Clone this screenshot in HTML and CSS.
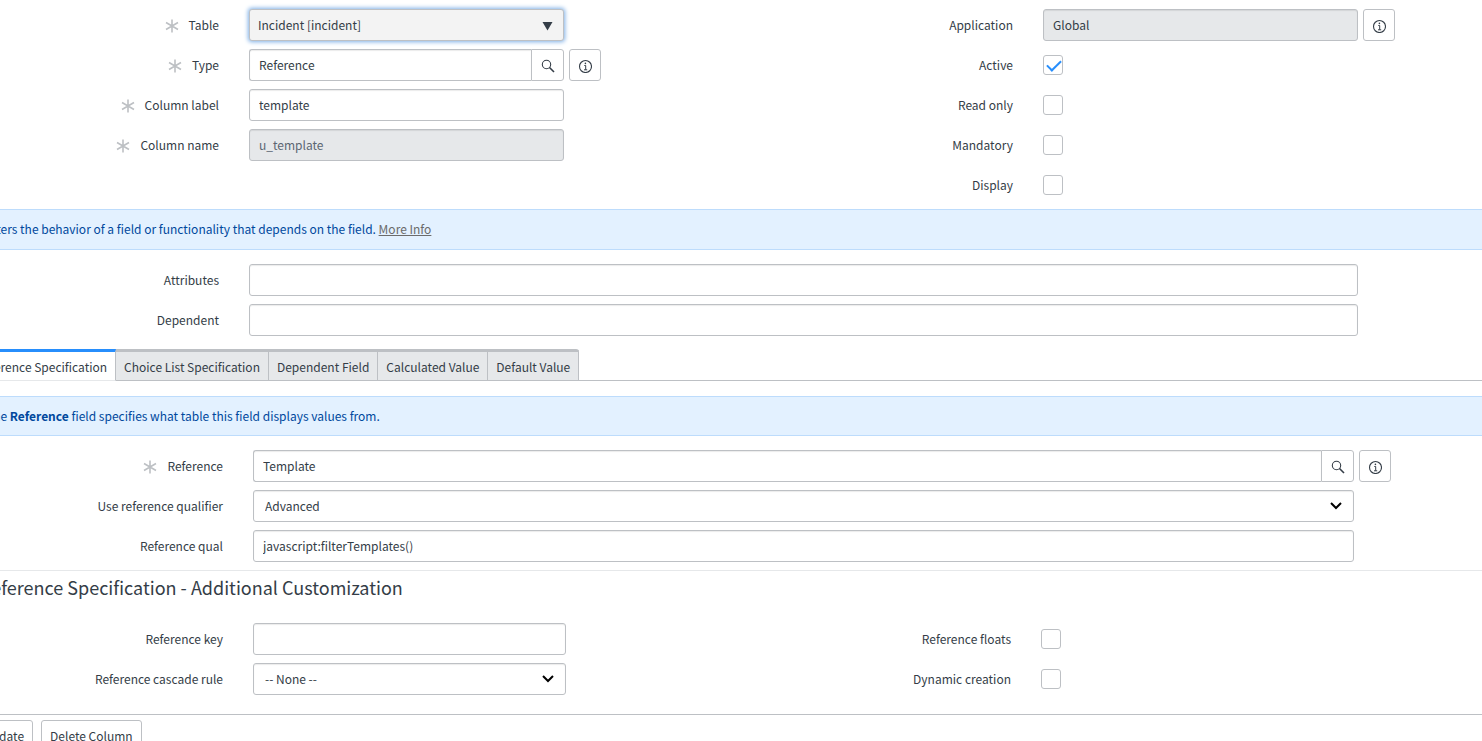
FILE: index.html
```html
<!doctype html>
<html lang="en">
<head>
    <meta charset="utf-8">
    <meta name="viewport" content="width=device-width, initial-scale=1">
    <title>Dictionary Entry</title>
    <link rel="stylesheet" href="styles.css">
</head>
<body>
    <!-- shared icons -->
    <svg class="sprite" aria-hidden="true">
        <symbol id="star" viewBox="0 0 14 14">
            <path d="M7 0.5v13M1 3.5l12 7M13 3.5l-12 7" fill="none" stroke="#bdc0c4" stroke-width="1.6"/>
        </symbol>
        <symbol id="search" viewBox="0 0 14 14">
            <circle cx="5.5" cy="5.5" r="4.2" fill="none" stroke="#343d47" stroke-width="1.1"/>
            <path d="M8.5 8.5l4.5 4.5" fill="none" stroke="#343d47" stroke-width="1.6"/>
        </symbol>
        <symbol id="info" viewBox="0 0 14 14">
            <circle cx="7.5" cy="7.5" r="6" fill="none" stroke="#343d47" stroke-width="1.1"/>
            <path d="M6.3 6.5h1.4v4.2M6 10.8h3.2" fill="none" stroke="#343d47" stroke-width="1"/>
            <circle cx="7.4" cy="4.4" r="0.8" fill="#343d47"/>
        </symbol>
        <symbol id="chevron" viewBox="0 0 14 14">
            <path d="M1 4l5 5 5-5" fill="none" stroke="#000" stroke-width="2"/>
        </symbol>
        <symbol id="triangle" viewBox="0 0 14 14">
            <path d="M2.5 4h10l-5 8.5z" fill="#343d47"/>
        </symbol>
    </svg>

    <form class="page">
        <div class="fields">
            <label class="label" for="table"><svg class="star"><use href="#star"/></svg>Table</label>
            <div class="field select">
                <select id="table" class="control focused"><option>Incident [incident]</option></select>
                <svg class="arrow"><use href="#triangle"/></svg>
            </div>
            <label class="label right" for="application">Application</label>
            <div class="field right"><input id="application" class="control" type="text" value="Global" readonly></div>
            <div class="addon right"><button type="button" class="icon-btn" aria-label="Application info"><svg class="icon"><use href="#info"/></svg></button></div>

            <label class="label" for="type"><svg class="star"><use href="#star"/></svg>Type</label>
            <div class="field group">
                <input id="type" class="control" type="text" value="Reference">
                <button type="button" class="icon-btn" aria-label="Look up type"><svg class="icon"><use href="#search"/></svg></button>
            </div>
            <div class="addon"><button type="button" class="icon-btn" aria-label="Type info"><svg class="icon"><use href="#info"/></svg></button></div>
            <label class="label right" for="active">Active</label>
            <div class="field right"><input id="active" class="check" type="checkbox" checked></div>

            <label class="label" for="column_label"><svg class="star"><use href="#star"/></svg>Column label</label>
            <div class="field"><input id="column_label" class="control" type="text" value="template"></div>
            <label class="label right" for="read_only">Read only</label>
            <div class="field right"><input id="read_only" class="check" type="checkbox"></div>

            <label class="label" for="column_name"><svg class="star"><use href="#star"/></svg>Column name</label>
            <div class="field"><input id="column_name" class="control muted" type="text" value="u_template" readonly></div>
            <label class="label right" for="mandatory">Mandatory</label>
            <div class="field right"><input id="mandatory" class="check" type="checkbox"></div>

            <label class="label right" for="display">Display</label>
            <div class="field right"><input id="display" class="check" type="checkbox"></div>
        </div>

        <div class="message">alters the behavior of a field or functionality that depends on the field. <a href="#">More Info</a></div>

        <div class="fields">
            <label class="label" for="attributes">Attributes</label>
            <div class="field wide"><input id="attributes" class="control" type="text"></div>
            <label class="label" for="dependent">Dependent</label>
            <div class="field wide"><input id="dependent" class="control" type="text"></div>
        </div>

        <div class="tabs" role="tablist">
            <button type="button" class="tab active" role="tab" aria-selected="true">Reference Specification</button>
            <button type="button" class="tab" role="tab">Choice List Specification</button>
            <button type="button" class="tab" role="tab">Dependent Field</button>
            <button type="button" class="tab" role="tab">Calculated Value</button>
            <button type="button" class="tab" role="tab">Default Value</button>
        </div>

        <div class="message compact">The <b>Reference</b> field specifies what table this field displays values from.</div>

        <div class="fields inset">
            <label class="label" for="reference"><svg class="star"><use href="#star"/></svg>Reference</label>
            <div class="field wide group">
                <input id="reference" class="control" type="text" value="Template">
                <button type="button" class="icon-btn" aria-label="Look up reference"><svg class="icon"><use href="#search"/></svg></button>
            </div>
            <div class="addon right"><button type="button" class="icon-btn" aria-label="Reference info"><svg class="icon"><use href="#info"/></svg></button></div>
            <label class="label" for="qualifier">Use reference qualifier</label>
            <div class="field wide select">
                <select id="qualifier" class="control"><option>Advanced</option></select>
                <svg class="arrow"><use href="#chevron"/></svg>
            </div>
            <label class="label" for="qual">Reference qual</label>
            <div class="field wide"><input id="qual" class="control" type="text" value="javascript:filterTemplates()"></div>
        </div>

        <h2>Reference Specification - Additional Customization</h2>

        <div class="fields inset">
            <label class="label" for="ref_key">Reference key</label>
            <div class="field"><input id="ref_key" class="control" type="text"></div>
            <label class="label right" for="floats">Reference floats</label>
            <div class="field right"><input id="floats" class="check" type="checkbox"></div>
            <label class="label" for="cascade">Reference cascade rule</label>
            <div class="field select">
                <select id="cascade" class="control"><option>-- None --</option></select>
                <svg class="arrow"><use href="#chevron"/></svg>
            </div>
            <label class="label right" for="dynamic">Dynamic creation</label>
            <div class="field right"><input id="dynamic" class="check" type="checkbox"></div>
        </div>

        <div class="actions">
            <button type="submit" class="btn">Update</button>
            <button type="button" class="btn">Delete Column</button>
        </div>
    </form>
</body>
</html>
```

FILE: styles.css
```css
* {
    box-sizing: border-box;
}
body {
    margin: 0;
    height: 100vh;
    overflow: hidden;
    background: #fff;
    color: #343d47;
    font-family: "Noto Sans CJK SC", "Noto Sans", sans-serif;
    font-size: 12px;
    line-height: 20px;
}
input, select, button {
    margin: 0;
    font: inherit;
    color: inherit;
}
.sprite {
    display: none;
}
/* the form is scrolled a little to the right */
.page {
    margin-left: -32px;
    padding-top: 9px;
}

/* label | field | info | label | field | info */
.fields {
    display: grid;
    grid-template-columns: 281px 1fr 37px 442px 1fr 124px;
    grid-auto-rows: 32px;
    row-gap: 8px;
}
.fields.inset {
    grid-template-columns: 285px 1fr 37px 438px 1fr 128px;
}
.label {
    grid-column: 1;
    display: flex;
    align-items: center;
    justify-content: flex-end;
    padding-right: 30px;
}
.field {
    grid-column: 2;
    display: flex;
    align-items: center;
}
.addon {
    grid-column: 3;
    padding-left: 5px;
}
.label.right {
    grid-column: 4;
}
.field.right {
    grid-column: 5;
}
.field.wide {
    grid-column: 2 / 6;
}
.addon.right {
    grid-column: 6;
}
.star {
    width: 14px;
    height: 14px;
    margin: 2px 10px 0 0;
}
.icon {
    display: block;
    width: 14px;
    height: 14px;
}

.control {
    flex: 1;
    min-width: 0;
    height: 32px;
    padding: 0 9px 1px;
    border: 1px solid #bdc0c4;
    border-radius: 3px;
    background: #fff;
    box-shadow: inset 0 1px 1px rgba(0, 0, 0, 0.08);
    appearance: none;
    outline: none;
}
select.control {
    padding: 0 32px 0 11px;
}
.control[readonly] {
    background: #e6e8ea;
}
.control.muted {
    color: #5b6672;
}
select.focused {
    padding-left: 8px;
    background: #f3f3f3;
    box-shadow: 0 0 4px 1px #7fb0e6;
}
.select {
    position: relative;
}
.arrow {
    position: absolute;
    right: 10px;
    top: 9px;
    width: 14px;
    height: 14px;
    pointer-events: none;
}
.icon-btn {
    display: flex;
    align-items: center;
    justify-content: center;
    width: 32px;
    height: 32px;
    padding: 2px 0 0;
    border: 1px solid #bdc0c4;
    border-radius: 3px;
    background: #fff;
}
.group .control {
    border-right: 0;
    border-radius: 3px 0 0 3px;
}
.group .icon-btn {
    width: 33px;
    border-radius: 0 3px 3px 0;
}
.check {
    width: 20px;
    height: 20px;
    border: 1px solid #bdc0c4;
    border-radius: 3px;
    background: #fff;
    appearance: none;
}
.check:checked::before {
    content: "";
    display: block;
    width: 12px;
    height: 6px;
    margin: 4px 0 0 3px;
    border: solid #278efc;
    border-width: 0 0 2px 2px;
    transform: rotate(-45deg);
}

.message {
    margin: 8px 0 14px;
    padding: 9px 18px 10px;
    border: solid #bddcfc;
    border-width: 1px 0;
    background: #e3f1ff;
    color: #00489d;
}
.message.compact {
    padding-bottom: 9px;
}
.message a {
    color: #6b6b6b;
}

.tabs {
    display: flex;
    height: 32px;
    margin: 13px 0 15px;
    border-bottom: 1px solid #bdc0c4;
}
.tab {
    height: 32px;
    padding: 2px 8px 0;
    border: solid #bdc0c4;
    border-width: 3px 1px 1px 0;
    background: #e6e8ea;
    white-space: nowrap;
}
.tab:last-child {
    border-top-right-radius: 3px;
}
.tab.active {
    border-top-color: #278efc;
    border-bottom-color: #e6e8ea;
    background: #fff;
}

h2 {
    margin: 8px 0 20px;
    padding: 4px 12px;
    border-top: 1px solid #e6e8ea;
    font-size: 18px;
    line-height: 24px;
    font-weight: normal;
}
.actions {
    display: flex;
    gap: 8px;
    margin-top: 19px;
    padding: 5px 0 0 6px;
    border-top: 1px solid #bdc0c4;
}
.btn {
    height: 32px;
    padding: 0 8px;
    border: 1px solid #bdc0c4;
    border-radius: 3px;
    background: #fff;
}
```
